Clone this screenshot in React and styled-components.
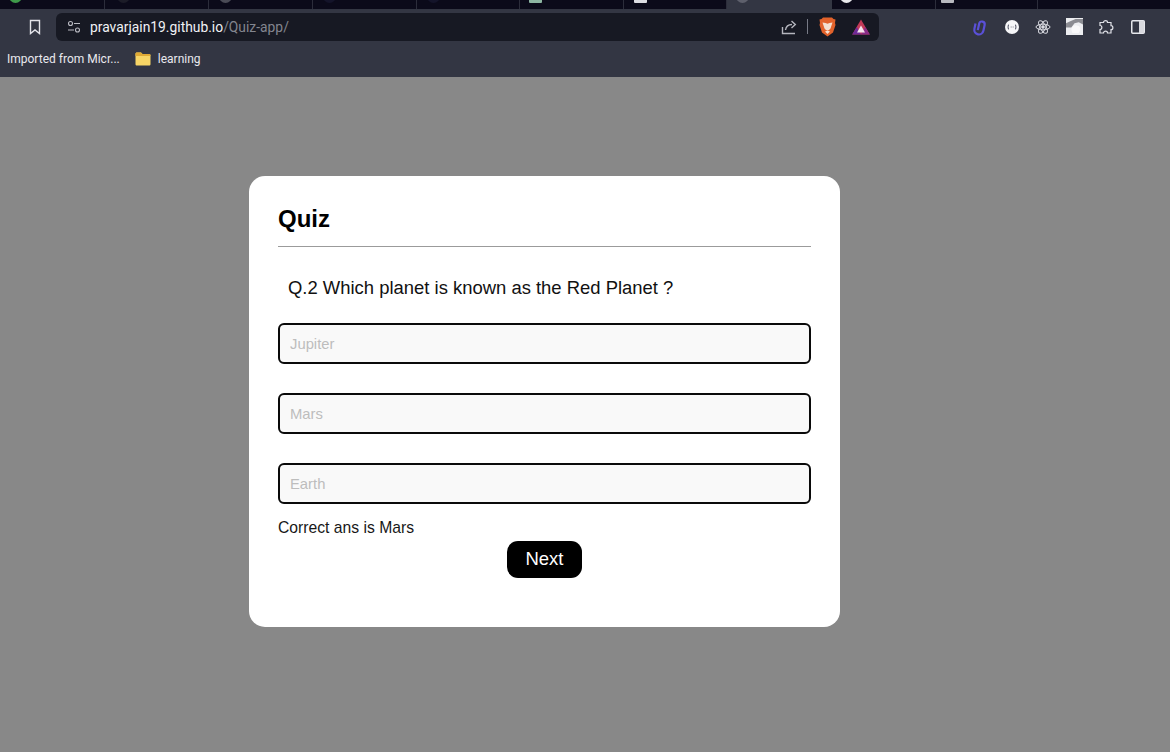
import React from 'react';
import styled, { createGlobalStyle } from 'styled-components';

const GlobalStyle = createGlobalStyle`
  html, body {
    margin: 0;
    padding: 0;
    height: 100%;
    overflow: hidden;
    background: #888888;
    font-family: 'Liberation Sans', Arial, sans-serif;
  }
  * {
    box-sizing: border-box;
  }
`;

const Screen = styled.div`
  width: 1170px;
  height: 752px;
  display: flex;
  flex-direction: column;
  overflow: hidden;
`;

const TabStrip = styled.div`
  height: 9px;
  display: flex;
  background: #0b0a1a;
  overflow: hidden;
`;

const Tab = styled.div`
  width: ${(p) => p.$w}px;
  height: 9px;
  padding-left: ${(p) => p.$iconAt}px;
  border-right: 1px solid ${(p) => (p.$active ? '#333643' : '#2c2d3b')};
  background: ${(p) => (p.$active ? '#333643' : 'transparent')};
  overflow: hidden;
`;

const TabIcon = styled.div`
  width: 13px;
  height: 13px;
  margin-top: -10px;
  border-radius: ${(p) => (p.$square ? '1px' : '50%')};
  background: ${(p) => p.$color};
`;

const Toolbar = styled.div`
  height: 35px;
  display: flex;
  align-items: center;
  padding: 0 0 0 28px;
  background: #333643;
`;

const BookmarkBtn = styled.svg`
  width: 14px;
  height: 16px;
  margin-right: 14px;
  flex-shrink: 0;
`;

const AddressBar = styled.div`
  width: 823px;
  height: 28px;
  display: flex;
  align-items: center;
  padding: 0 9px 0 11px;
  border-radius: 6px;
  background: #171923;
`;

const SiteIcon = styled.svg`
  width: 14px;
  height: 14px;
  margin-right: 9px;
  flex-shrink: 0;
`;

const Url = styled.div`
  flex: 1;
  padding-top: 1px;
  font-family: Roboto, sans-serif;
  font-size: 13.85px;
  color: #f1f1f4;
  white-space: nowrap;
`;

const UrlPath = styled.span`
  color: #83858f;
`;

const ShareIcon = styled.svg`
  width: 16px;
  height: 16px;
  margin-right: 10px;
`;

const BarDivider = styled.div`
  width: 1px;
  height: 15px;
  margin-right: 11px;
  background: #777a86;
`;

const BraveIcon = styled.svg`
  width: 17px;
  height: 20px;
  margin-right: 16px;
`;

const TriangleIcon = styled.svg`
  width: 18px;
  height: 16px;
`;

const Extensions = styled.div`
  display: flex;
  align-items: center;
  gap: 15px;
  margin-left: 92px;
`;

const ExtIcon = styled.svg`
  width: ${(p) => p.$size || 16}px;
  height: ${(p) => p.$size || 16}px;
  flex-shrink: 0;
`;

const SidebarIcon = styled(ExtIcon)`
  margin-left: 2px;
`;

const BookmarksBar = styled.div`
  height: 33px;
  display: flex;
  align-items: center;
  padding: 0 0 4px 7px;
  background: #333643;
  color: #e9e9ee;
  font-family: Roboto, sans-serif;
  font-size: 12px;
`;

const BookmarkLabel = styled.span`
  margin-right: ${(p) => p.$gap || 0}px;
  white-space: nowrap;
`;

const FolderIcon = styled.svg`
  width: 16px;
  height: 14px;
  margin-right: 7px;
`;

const Page = styled.main`
  flex: 1;
  padding: 99px 0 0 249px;
  background: #888888;
`;

const Card = styled.section`
  width: 591px;
  height: 451px;
  padding: 30px 29px;
  background: #ffffff;
  border-radius: 16px;
`;

const Title = styled.h1`
  margin: 0;
  height: 40px;
  font-size: 24px;
  line-height: 26px;
  font-weight: 700;
  color: #000000;
`;

const Rule = styled.hr`
  margin: 0;
  border: none;
  height: 1px;
  background: #9b9b9b;
`;

const Question = styled.h2`
  margin: 30px 0 25px 10px;
  font-size: 18.45px;
  line-height: 21px;
  font-weight: 400;
  color: #111111;
`;

const Options = styled.div`
  display: flex;
  flex-direction: column;
  gap: 29px;
`;

const Option = styled.input`
  width: 533px;
  height: 41px;
  padding: 0 10px;
  font-family: inherit;
  font-size: 14.8px;
  background: #f9f9f9;
  border: 2px solid #0a0a0a;
  border-radius: 6px;

  &::placeholder {
    color: #bdbdbd;
    opacity: 1;
  }
`;

const Answer = styled.p`
  margin: 14px 0 0;
  font-size: 15.7px;
  line-height: 19px;
  color: #171717;
`;

const ButtonRow = styled.div`
  display: flex;
  justify-content: center;
  margin-top: 4px;
`;

const NextButton = styled.button`
  width: 75px;
  height: 37px;
  padding: 0 0 2px;
  border: none;
  border-radius: 11px;
  background: #000000;
  color: #ffffff;
  font-family: inherit;
  font-size: 18.5px;
  cursor: pointer;
`;

const tabs = [
  { w: 105, iconAt: 9, color: '#3f9a4a' },
  { w: 104, iconAt: 12, color: '#1c1c28' },
  { w: 104, iconAt: 10, color: '#4a4b56' },
  { w: 104, iconAt: 10, color: '#14142a' },
  { w: 103, iconAt: 10, color: '#14142a' },
  { w: 104, iconAt: 9, color: '#8db5a2', square: true },
  { w: 103, iconAt: 10, color: '#dcdce2', square: true },
  { w: 105, iconAt: 9, color: '#5e606c', active: true },
  { w: 104, iconAt: 8, color: '#e8e8ec' },
  { w: 102, iconAt: 5, color: '#b8b9c0', square: true },
];

const App = () => {
  return (
    <Screen>
      <GlobalStyle />
      <TabStrip>
        {tabs.map((tab, i) => (
          <Tab key={i} $w={tab.w} $iconAt={tab.iconAt} $active={tab.active}>
            <TabIcon $color={tab.color} $square={tab.square} />
          </Tab>
        ))}
      </TabStrip>

      <Toolbar>
        <BookmarkBtn viewBox="0 0 14 16" fill="none" stroke="#e4e4ea" strokeWidth="1.4">
          <path d="M2.500 1.500h9v13L7 11l-4.500 3.500z" />
        </BookmarkBtn>
        <AddressBar>
          <SiteIcon viewBox="0 0 14 14" fill="none" stroke="#b9bac2" strokeWidth="1.1">
            <circle cx="3.500" cy="3.500" r="2" />
            <path d="M7 3.500h6M1 10h6" />
            <circle cx="10.500" cy="10" r="2" />
          </SiteIcon>
          <Url>
            pravarjain19.github.io<UrlPath>/Quiz-app/</UrlPath>
          </Url>
          <ShareIcon viewBox="0 0 16 16" fill="none" stroke="#b5b6be" strokeWidth="1.4">
            <path d="M1.500 8v6.500h12.500" />
            <path d="M4.500 11c.5-3.500 3-5.500 6.500-5.500M10.500 2l3.800 3.500-3.800 3.500" />
          </ShareIcon>
          <BarDivider />
          <BraveIcon viewBox="0 0 17 20">
            <path d="M4 .5h9l1.500 1.500 2 .5-.5 3.500.5 2-2.500 7.500-5.500 4-5.500-4L.500 8 1 6 .500 2.500l2-.5z" fill="#e2622b" />
            <path d="M3.500 5.500l3 .5 2 .8 2-.8 3-.5-2 6-1.500 1.500-1.500.5-1.500-.5-1.500-1.500z" fill="#f4dfd0" />
            <path d="M6 14.500l2.500-1 2.500 1-2.500 2.500z" fill="#f4dfd0" />
          </BraveIcon>
          <TriangleIcon viewBox="0 0 18 16">
            <path d="M9 .5l8.800 15H.2z" fill="#c23a58" />
            <path d="M.2 15.500L4.800 8 9 15.500z" fill="#6d2a98" />
            <path d="M17.800 15.500L13.200 8 9 15.500z" fill="#8a2c88" />
            <path d="M9 6.500l4 7H5z" fill="#f6e6ee" />
          </TriangleIcon>
        </AddressBar>
        <Extensions>
          <ExtIcon viewBox="0 0 16 18" $size={18} fill="none" stroke="#5a50d8" strokeWidth="2.2">
            <g transform="rotate(12 8 9)">
              <path d="M6.500 12.500V6a2.800 2.800 0 0 1 5.600 0v6a4.600 4.600 0 0 1-9.200 0V6.500" />
            </g>
          </ExtIcon>
          <ExtIcon viewBox="0 0 16 16" fill="none">
            <circle cx="8" cy="8" r="7" fill="#f6f6f8" />
            <path d="M5 5.500C3.800 6 4.600 7.500 3.800 8c.8.500 0 2 1.200 2.500M11 5.500c1.200.5.400 2 1.200 2.500-.8.500 0 2-1.200 2.500" stroke="#33364a" strokeWidth="1" />
            <path d="M6.800 8h.6M8.800 8h.6" stroke="#33364a" strokeWidth="1" />
          </ExtIcon>
          <ExtIcon viewBox="0 0 16 16" fill="none" stroke="#d8d9e0" strokeWidth="1">
            <ellipse cx="8" cy="8" rx="7" ry="2.800" />
            <ellipse cx="8" cy="8" rx="7" ry="2.800" transform="rotate(60 8 8)" />
            <ellipse cx="8" cy="8" rx="7" ry="2.800" transform="rotate(120 8 8)" />
            <circle cx="8" cy="8" r="1.300" fill="#d8d9e0" />
          </ExtIcon>
          <ExtIcon viewBox="0 0 16 16" $size={17}>
            <rect width="16" height="16" fill="#ecedf0" />
            <path d="M0 5l4-2 5-2h7v5l-4-2-4 1-3 4H0z" fill="#8b8c92" />
            <path d="M5 11c0-3 3-5 5-4 3 0 4 3 3 5l-1 2H6z" fill="#f9f9fa" />
          </ExtIcon>
          <ExtIcon viewBox="0 0 16 16" fill="none" stroke="#e0e1e7" strokeWidth="1.2">
            <path d="M5.500 3.500C5.500 1 9.500 1 9.500 3.500H13v3.200c2.500 0 2.500 4 0 4V14H9.500c0-2.500-4-2.500-4 0H2V10.500c2.500 0 2.500-4 0-4V3.500z" />
          </ExtIcon>
          <SidebarIcon viewBox="0 0 14 14" $size={14}>
            <rect x=".75" y=".75" width="12.500" height="12.500" rx="1" fill="none" stroke="#e6e7ec" strokeWidth="1.500" />
            <rect x="8" y="1" width="5" height="12" fill="#d8d9de" />
          </SidebarIcon>
        </Extensions>
      </Toolbar>

      <BookmarksBar>
        <BookmarkLabel $gap={15}>Imported from Micr...</BookmarkLabel>
        <FolderIcon viewBox="0 0 16 14">
          <path d="M.5 2C.5 1 1 .5 2 .5h4L7.500 2H14c1 0 1.500.5 1.500 1.500V12c0 1-.5 1.500-1.500 1.500H2C1 13.500.5 13 .5 12z" fill="#f7d566" />
          <path d="M.5 2C.5 1 1 .5 2 .5h4L7.500 2H14c1 0 1.500.5 1.500 1.500V4H.5z" fill="#dfa935" />
        </FolderIcon>
        <BookmarkLabel>learning</BookmarkLabel>
      </BookmarksBar>

      <Page>
        <Card>
          <Title>Quiz</Title>
          <Rule />
          <Question>Q.2 Which planet is known as the Red Planet ?</Question>
          <Options>
            <Option placeholder="Jupiter" readOnly />
            <Option placeholder="Mars" readOnly />
            <Option placeholder="Earth" readOnly />
          </Options>
          <Answer>Correct ans is Mars</Answer>
          <ButtonRow>
            <NextButton type="button">Next</NextButton>
          </ButtonRow>
        </Card>
      </Page>
    </Screen>
  );
};

export default App;
